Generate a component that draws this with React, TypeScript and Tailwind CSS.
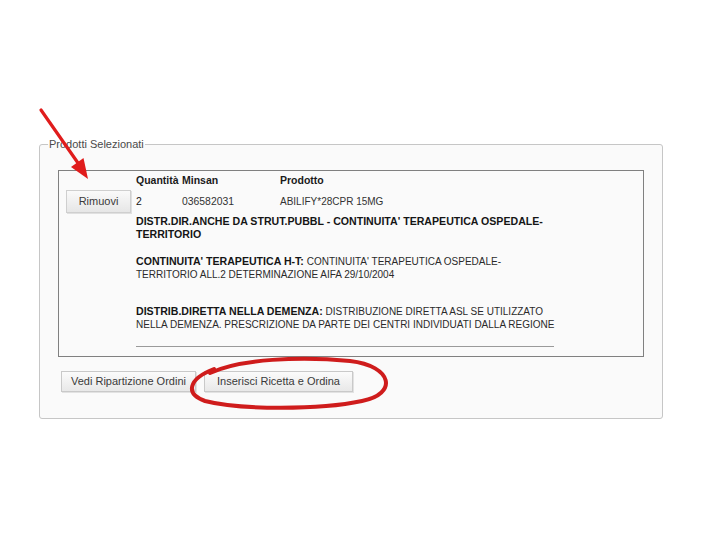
import React from "react";

const Btn = ({ w, children }: { w: string; children: React.ReactNode }) => (
  <div
    className={`${w} h-[21px] flex items-center justify-center border border-[#c9c9c9] bg-linear-to-b from-[#fbfbfb] to-[#e8e8e8] text-[11px] text-[#3a3a3a] shadow-[1px_1px_0_#e2e2e2]`}
  >
    {children}
  </div>
);

export default function App() {
  return (
    <div className="relative w-[720px] h-[540px] bg-white font-['Liberation_Sans',Arial,sans-serif] overflow-hidden">
      <div className="pt-[137px] pl-[39px]">
        <fieldset className="w-[624px] border border-[#c6c6c6] rounded-[3px] bg-[#fafafa] px-[18px] pb-[26px]">
          <legend className="ml-[-10px] px-[1px] text-[11px] leading-[14px] text-[#4a4a4a]">
            Prodotti Selezionati
          </legend>
          <div className="mt-[19px] h-[187px] border border-[#808080] bg-[#fafafa] pl-[7px] pt-[3px] text-[#151515]">
            <div className="flex h-[13px] leading-[13px] text-[10.5px] font-bold text-[#1a1a1a]">
              <div className="w-[70px]" />
              <div className="w-[46px]">Quantità</div>
              <div className="w-[98px]">Minsan</div>
              <div>Prodotto</div>
            </div>
            <div className="mt-[3px] flex h-[23px] items-center text-[10.4px]">
              <div className="w-[70px]">
                <div className="w-[65px] h-[23px] flex items-center justify-center border border-[#cfcfcf] bg-linear-to-b from-[#fafafa] to-[#e6e6e6] text-[11px] text-[#3a3a3a] shadow-[1px_1px_0_#e0e0e0]">
                  Rimuovi
                </div>
              </div>
              <div className="w-[46px]">2</div>
              <div className="w-[98px] text-[#333]">036582031</div>
              <div className="text-[#333] text-[10px]">ABILIFY*28CPR 15MG</div>
            </div>
            <div className="pl-[70px] text-[10px] leading-[13px]">
              <div className="mt-[2px] font-bold text-[10.6px]">
                DISTR.DIR.ANCHE DA STRUT.PUBBL - CONTINUITA' TERAPEUTICA OSPEDALE-
                <br />
                TERRITORIO
              </div>
              <div className="mt-[14px] text-[#2a2a2a]">
                <span className="font-bold text-[10.6px] text-[#151515]">CONTINUITA' TERAPEUTICA H-T:</span> CONTINUITA' TERAPEUTICA OSPEDALE-
                <br />
                TERRITORIO ALL.2 DETERMINAZIONE AIFA 29/10/2004
              </div>
              <div className="mt-[24px] text-[#2a2a2a]">
                <span className="font-bold text-[10.6px] text-[#151515]">DISTRIB.DIRETTA NELLA DEMENZA:</span> DISTRIBUZIONE DIRETTA ASL SE UTILIZZATO
                <br />
                NELLA DEMENZA. PRESCRIZIONE DA PARTE DEI CENTRI INDIVIDUATI DALLA REGIONE
              </div>
              <div className="mt-[15px] w-[418px] border-t border-[#9a9a9a]" />
            </div>
          </div>
          <div className="mt-[14px] ml-[3px] flex gap-[8px]">
            <Btn w="w-[135px]">Vedi Ripartizione Ordini</Btn>
            <Btn w="w-[149px]">Inserisci Ricetta e Ordina</Btn>
          </div>
        </fieldset>
      </div>

      <svg
        className="absolute left-0 top-0 pointer-events-none"
        width="720"
        height="540"
        viewBox="0 0 720 540"
      >
        <line x1="41" y1="110" x2="78" y2="163" stroke="#e01c1c" strokeWidth="3.2" strokeLinecap="round" />
        <polygon points="88,179 71,167 83.5,158" fill="#e01c1c" />
        <path
          d="M 210 373 C 240 359, 300 356, 350 361 C 393 366, 398 394, 362 401 C 320 410, 240 410, 205 401 C 185 394, 188 379, 214 369"
          fill="none"
          stroke="#cf1c1c"
          strokeWidth="4"
          strokeLinecap="round"
        />
      </svg>
    </div>
  );
}
